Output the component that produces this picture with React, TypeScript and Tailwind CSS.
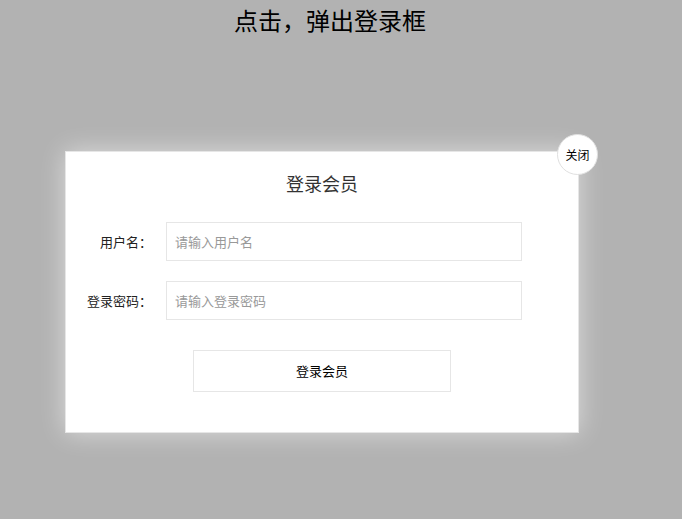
import React from "react";

export default function App() {
  const font = { fontFamily: '"Microsoft YaHei", "Noto Sans CJK SC", "Noto Sans", sans-serif' };
  return (
    <div className="relative h-[519px] w-full overflow-hidden bg-white" style={font}>
      <h1 className="pt-[3px] pr-[22px] text-center text-[24px] leading-[34px] font-normal text-black">
        点击，弹出登录框
      </h1>
      <div className="absolute inset-0 bg-[rgba(0,0,0,0.3)]" />
      <div className="absolute left-[65px] top-[151px] h-[282px] w-[514px] border border-[#e6e6e6] bg-white shadow-[0_0_24px_rgba(255,255,255,0.55)]">
        <div className="mt-[11px] h-[40px] text-center text-[18px] leading-[40px] text-[#333]">登录会员</div>
        <div className="mt-[19px] flex flex-col gap-[20px]">
          <div className="flex items-center">
            <label className="w-[86px] text-right text-[13px] text-[#222]">用户名：</label>
            <div className="ml-[14px] flex h-[39px] w-[356px] items-center border border-[#e6e6e6] pl-[8px] text-[13px] text-[#999]">
              请输入用户名
            </div>
          </div>
          <div className="flex items-center">
            <label className="w-[86px] text-right text-[13px] text-[#222]">登录密码：</label>
            <div className="ml-[14px] flex h-[39px] w-[356px] items-center border border-[#e6e6e6] pl-[8px] text-[13px] text-[#999]">
              请输入登录密码
            </div>
          </div>
        </div>
        <div className="mt-[30px] flex justify-start pl-[127px]">
          <button className="h-[42px] w-[258px] border border-[#e6e6e6] bg-white text-[13px] text-black">
            登录会员
          </button>
        </div>
        <button className="absolute left-[491px] top-[-18px] flex h-[41px] w-[41px] items-center justify-center rounded-full border border-[#e0e0e0] bg-white text-[12px] text-black">
          关闭
        </button>
      </div>
    </div>
  );
}
